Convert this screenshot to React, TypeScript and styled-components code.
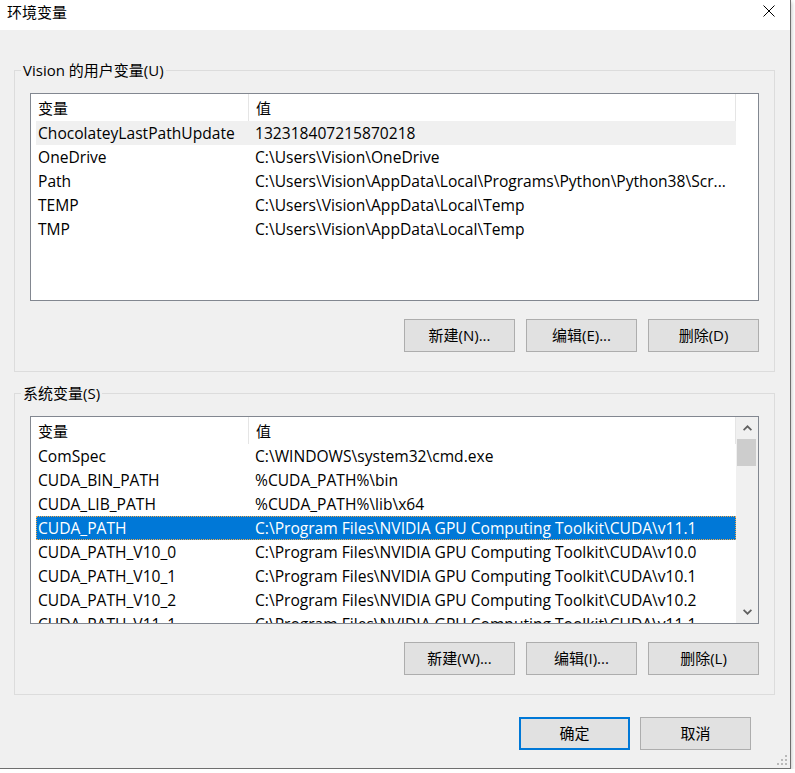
import React from 'react';
import styled, { createGlobalStyle, css } from 'styled-components';

const GlobalStyle = createGlobalStyle`
  html, body {
    margin: 0;
    padding: 0;
    background: #ffffff;
  }
  body {
    font-family: "Open Sans", "Noto Sans CJK SC", sans-serif;
    font-size: 15.6px;
    color: #000000;
  }
  * {
    box-sizing: border-box;
  }
`;

const Window = styled.div`
  position: relative;
  width: 791px;
  height: 769px;
  display: flex;
  flex-direction: column;
  background: #f0f0f0;
  border-right: 1px solid #6e6e6e;
  border-bottom: 1px solid #6e6e6e;
  box-shadow: 1px 2px 4px rgba(0, 0, 0, 0.22);
`;

const TitleBar = styled.div`
  flex: none;
  height: 30px;
  display: flex;
  justify-content: space-between;
  align-items: flex-start;
  padding: 2px 15px 0 7px;
  background: #ffffff;
`;

const Title = styled.span`
  font-size: 15px;
  line-height: 20px;
`;

const CloseButton = styled.button`
  margin-top: 3px;
  width: 12px;
  height: 12px;
  padding: 0;
  border: none;
  background: transparent;
  display: block;
  line-height: 0;
`;

const Body = styled.div`
  flex: 1;
  display: flex;
  flex-direction: column;
  padding: 30px 15px 0 14px;
`;

const Group = styled.fieldset`
  margin: 0;
  min-width: 0;
  padding: 13px 15px 19px 15px;
  border: 1px solid #dcdcdc;

  & + & {
    margin-top: 11px;
  }
`;

const Caption = styled.legend`
  margin-left: -9px;
  padding: 0 2px;
  font-size: 15px;
  line-height: 20px;
`;

const ListView = styled.div`
  height: 208px;
  display: flex;
  overflow: hidden;
  background: #ffffff;
  border: 1px solid #828790;
`;

const Viewport = styled.div`
  flex: 1;
  min-width: 0;
  overflow: hidden;
`;

const HeaderRow = styled.div`
  display: flex;
  width: 705px;
  height: 27px;
`;

const HeaderCell = styled.div<{ $w: number }>`
  flex: none;
  width: ${(p) => p.$w}px;
  padding-left: 7px;
  border-right: 1px solid #e5e5e5;
  font-size: 15px;
  line-height: 28px;
`;

const Row = styled.div<{ $state?: 'hover' | 'selected' }>`
  display: flex;
  width: 700px;
  height: 24px;
  margin-left: 5px;
  line-height: 24px;
  white-space: nowrap;

  ${(p) =>
    p.$state === 'hover' &&
    css`
      background: #f0f0f0;
    `}

  ${(p) =>
    p.$state === 'selected' &&
    css`
      background: #0078d7;
      color: #ffffff;
      outline: 1px dotted #f2a94a;
      outline-offset: -1px;
    `}
`;

const NameCell = styled.span`
  flex: none;
  width: 219px;
  padding-left: 2px;
  overflow: hidden;
`;

const ValueCell = styled.span`
  flex: 1;
  min-width: 0;
  overflow: hidden;
`;

const ScrollBar = styled.div`
  flex: none;
  width: 22px;
  display: flex;
  flex-direction: column;
  background: #f0f0f0;
`;

const ArrowBox = styled.div`
  flex: none;
  height: 22px;
  display: flex;
  align-items: center;
  justify-content: center;
`;

const Thumb = styled.div`
  flex: none;
  height: 27px;
  margin: 0 2px 0 1px;
  background: #cdcdcd;
`;

const Track = styled.div`
  flex: 1;
`;

const ButtonRow = styled.div<{ $top: number; $right?: number }>`
  display: flex;
  justify-content: flex-end;
  gap: 11px;
  margin-top: ${(p) => p.$top}px;
  padding-right: ${(p) => p.$right ?? 0}px;
`;

const Button = styled.button<{ $default?: boolean }>`
  flex: none;
  width: 111px;
  height: 33px;
  padding: 0 0 2px;
  background: #e1e1e1;
  border: 1px solid #adadad;
  font-family: inherit;
  font-size: 15px;
  color: #000000;

  ${(p) =>
    p.$default &&
    css`
      border: 2px solid #0078d7;
    `}
`;

const Footer = styled(ButtonRow)`
  gap: 10px;
`;

const Grip = styled.div`
  position: absolute;
  right: 2px;
  bottom: 2px;
  width: 12px;
  height: 12px;
  line-height: 0;
`;

type Entry = { name: string; value: string; state?: 'hover' | 'selected' };

const userVars: Entry[] = [
  { name: 'ChocolateyLastPathUpdate', value: '132318407215870218', state: 'hover' },
  { name: 'OneDrive', value: String.raw`C:\Users\Vision\OneDrive` },
  { name: 'Path', value: String.raw`C:\Users\Vision\AppData\Local\Programs\Python\Python38\Scr...` },
  { name: 'TEMP', value: String.raw`C:\Users\Vision\AppData\Local\Temp` },
  { name: 'TMP', value: String.raw`C:\Users\Vision\AppData\Local\Temp` },
];

const cuda = String.raw`C:\Program Files\NVIDIA GPU Computing Toolkit\CUDA\v`;

const systemVars: Entry[] = [
  { name: 'ComSpec', value: String.raw`C:\WINDOWS\system32\cmd.exe` },
  { name: 'CUDA_BIN_PATH', value: String.raw`%CUDA_PATH%\bin` },
  { name: 'CUDA_LIB_PATH', value: String.raw`%CUDA_PATH%\lib\x64` },
  { name: 'CUDA_PATH', value: cuda + '11.1', state: 'selected' },
  { name: 'CUDA_PATH_V10_0', value: cuda + '10.0' },
  { name: 'CUDA_PATH_V10_1', value: cuda + '10.1' },
  { name: 'CUDA_PATH_V10_2', value: cuda + '10.2' },
  { name: 'CUDA_PATH_V11_1', value: cuda + '11.1' },
];

const Chevron = ({ down }: { down?: boolean }) => (
  <svg width="9" height="6" viewBox="0 0 9 6">
    <path
      d={down ? 'M0.6 0.8 L4.5 4.7 L8.4 0.8' : 'M0.6 5.2 L4.5 1.3 L8.4 5.2'}
      fill="none"
      stroke="#606060"
      strokeWidth="1.7"
    />
  </svg>
);

const VarList = ({ rows, scroll }: { rows: Entry[]; scroll?: boolean }) => (
  <ListView>
    <Viewport>
      <HeaderRow>
        <HeaderCell $w={218}>变量</HeaderCell>
        <HeaderCell $w={487}>值</HeaderCell>
      </HeaderRow>
      {rows.map((r) => (
        <Row key={r.name} $state={r.state}>
          <NameCell>{r.name}</NameCell>
          <ValueCell>{r.value}</ValueCell>
        </Row>
      ))}
    </Viewport>
    {scroll && (
      <ScrollBar>
        <ArrowBox>
          <Chevron />
        </ArrowBox>
        <Thumb />
        <Track />
        <ArrowBox>
          <Chevron down />
        </ArrowBox>
      </ScrollBar>
    )}
  </ListView>
);

export default function App() {
  return (
    <>
      <GlobalStyle />
      <Window>
        <TitleBar>
          <Title>环境变量</Title>
          <CloseButton aria-label="关闭">
            <svg width="12" height="12" viewBox="0 0 12 12">
              <path d="M0.5 0.5 L11.5 11.5 M11.5 0.5 L0.5 11.5" stroke="#000" strokeWidth="1" />
            </svg>
          </CloseButton>
        </TitleBar>
        <Body>
          <Group>
            <Caption>Vision 的用户变量(U)</Caption>
            <VarList rows={userVars} />
            <ButtonRow $top={18}>
              <Button>新建(N)...</Button>
              <Button>编辑(E)...</Button>
              <Button>删除(D)</Button>
            </ButtonRow>
          </Group>
          <Group>
            <Caption>系统变量(S)</Caption>
            <VarList rows={systemVars} scroll />
            <ButtonRow $top={18}>
              <Button>新建(W)...</Button>
              <Button>编辑(I)...</Button>
              <Button>删除(L)</Button>
            </ButtonRow>
          </Group>
          <Footer $top={22} $right={24}>
            <Button $default>确定</Button>
            <Button>取消</Button>
          </Footer>
        </Body>
        <Grip>
          <svg width="12" height="12" viewBox="0 0 12 12" fill="#b9b9b9">
            <rect x="9" y="1" width="2" height="2" />
            <rect x="5" y="5" width="2" height="2" />
            <rect x="9" y="5" width="2" height="2" />
            <rect x="1" y="9" width="2" height="2" />
            <rect x="5" y="9" width="2" height="2" />
            <rect x="9" y="9" width="2" height="2" />
          </svg>
        </Grip>
      </Window>
    </>
  );
}
